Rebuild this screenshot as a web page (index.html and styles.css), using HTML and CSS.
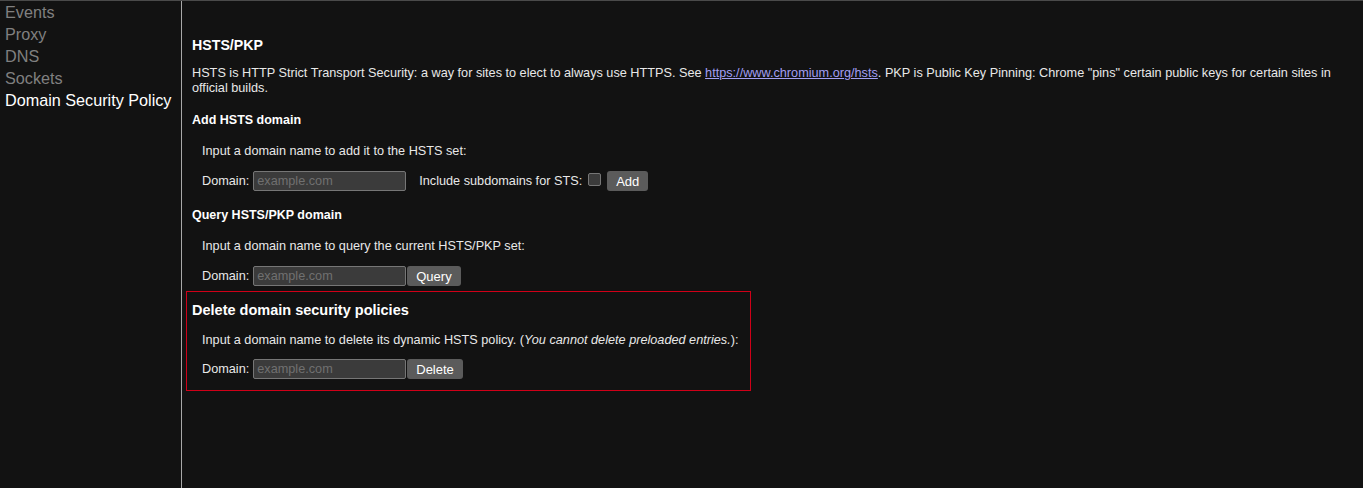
FILE: index.html
```html
<!DOCTYPE html>
<html lang="en">
<head>
  <meta charset="UTF-8">
  <title>net-internals</title>
  <link rel="stylesheet" href="styles.css">
</head>
<body>

<div class="page">
  <nav class="sidebar">
    <a class="tab">Events</a>
    <a class="tab">Proxy</a>
    <a class="tab">DNS</a>
    <a class="tab">Sockets</a>
    <a class="tab active">Domain Security Policy</a>
  </nav>

  <main class="content">
    <h2 class="title">HSTS/PKP</h2>
    <p class="intro">HSTS is HTTP Strict Transport Security: a way for sites to elect to always use HTTPS. See <a href="#">https://www.chromium.org/hsts</a>. PKP is Public Key Pinning: Chrome "pins" certain public keys for certain sites in official builds.</p>

    <h3 class="subtitle">Add HSTS domain</h3>
    <p class="hint">Input a domain name to add it to the HSTS set:</p>
    <div class="form-row">
      <label>Domain:</label>
      <input class="domain" type="text" placeholder="example.com">
      <label class="sts">Include subdomains for STS:</label>
      <input class="check" type="checkbox">
      <button class="btn">Add</button>
    </div>

    <h3 class="subtitle">Query HSTS/PKP domain</h3>
    <p class="hint">Input a domain name to query the current HSTS/PKP set:</p>
    <div class="form-row">
      <label>Domain:</label>
      <input class="domain" type="text" placeholder="example.com">
      <button class="btn tight">Query</button>
    </div>

    <section class="delete-box">
      <h3 class="box-title">Delete domain security policies</h3>
      <p class="hint">Input a domain name to delete its dynamic HSTS policy. (<i>You cannot delete preloaded entries.</i>):</p>
      <div class="form-row">
        <label>Domain:</label>
        <input class="domain" type="text" placeholder="example.com">
        <button class="btn tight">Delete</button>
      </div>
    </section>
  </main>
</div>

</body>
</html>
```

FILE: styles.css
```css
* {
  box-sizing: border-box;
}

html, body {
  margin: 0;
  height: 100%;
}

body {
  background: #121212;
  color: #e8e8e8;
  font-family: "Liberation Sans", Arial, sans-serif;
}

.page {
  display: flex;
  height: 100%;
  border-top: 1px solid #4a4a4a;
}

.sidebar {
  width: 182px;
  flex-shrink: 0;
  border-right: 1px solid #a8a8a8;
  display: flex;
  flex-direction: column;
  padding-left: 5px;
}

.tab {
  font-size: 16.2px;
  line-height: 22px;
  color: #808080;
  white-space: nowrap;
}

.tab.active {
  color: #ffffff;
}

.content {
  flex: 1;
  padding: 36px 24px 0 10px;
  font-size: 12.7px;
}

.title {
  font-size: 14.2px;
  line-height: 16px;
  font-weight: bold;
  margin: 0;
  color: #ffffff;
}

.intro {
  margin: 13px 0 0;
  line-height: 15px;
}

.intro a {
  color: #a39ff3;
}

.subtitle {
  font-size: 12.5px;
  line-height: 15px;
  font-weight: bold;
  margin: 17px 0 0;
  color: #ffffff;
}

.hint {
  margin: 16px 0 0;
  padding-left: 10px;
  line-height: 15px;
}

.form-row {
  display: flex;
  align-items: center;
  margin-top: 12px;
  padding-left: 10px;
  height: 20px;
}

.form-row label {
  margin-right: 4px;
}

.domain {
  width: 153px;
  height: 20px;
  background: #3b3b3b;
  border: 1px solid #767676;
  border-radius: 2px;
  color: #e8e8e8;
  font: 12.7px "Liberation Sans", Arial, sans-serif;
  padding: 0 3px;
}

.domain::placeholder {
  color: #707070;
}

.form-row .sts {
  margin-left: 13px;
  margin-right: 6px;
}

.check {
  appearance: none;
  width: 13px;
  height: 13px;
  margin: 0 6px 4px 0;
  border: 1px solid #767676;
  border-radius: 2px;
  background: #3b3b3b;
}

.btn {
  height: 20px;
  padding: 0 9px;
  background: #5b5b5b;
  border: none;
  border-radius: 3px;
  color: #ffffff;
  font: 13px "Liberation Sans", Arial, sans-serif;
}

.btn.tight {
  margin-left: 1px;
}

.delete-box {
  width: 565px;
  margin: 5px 0 0 -6px;
  padding: 10px 5px 11px;
  border: 1px solid #d00018;
}

.box-title {
  font-size: 14.5px;
  line-height: 17px;
  font-weight: bold;
  margin: 0;
  color: #ffffff;
}

.delete-box .hint {
  margin-top: 14px;
}

.delete-box .form-row {
  margin-top: 11px;
}
```
